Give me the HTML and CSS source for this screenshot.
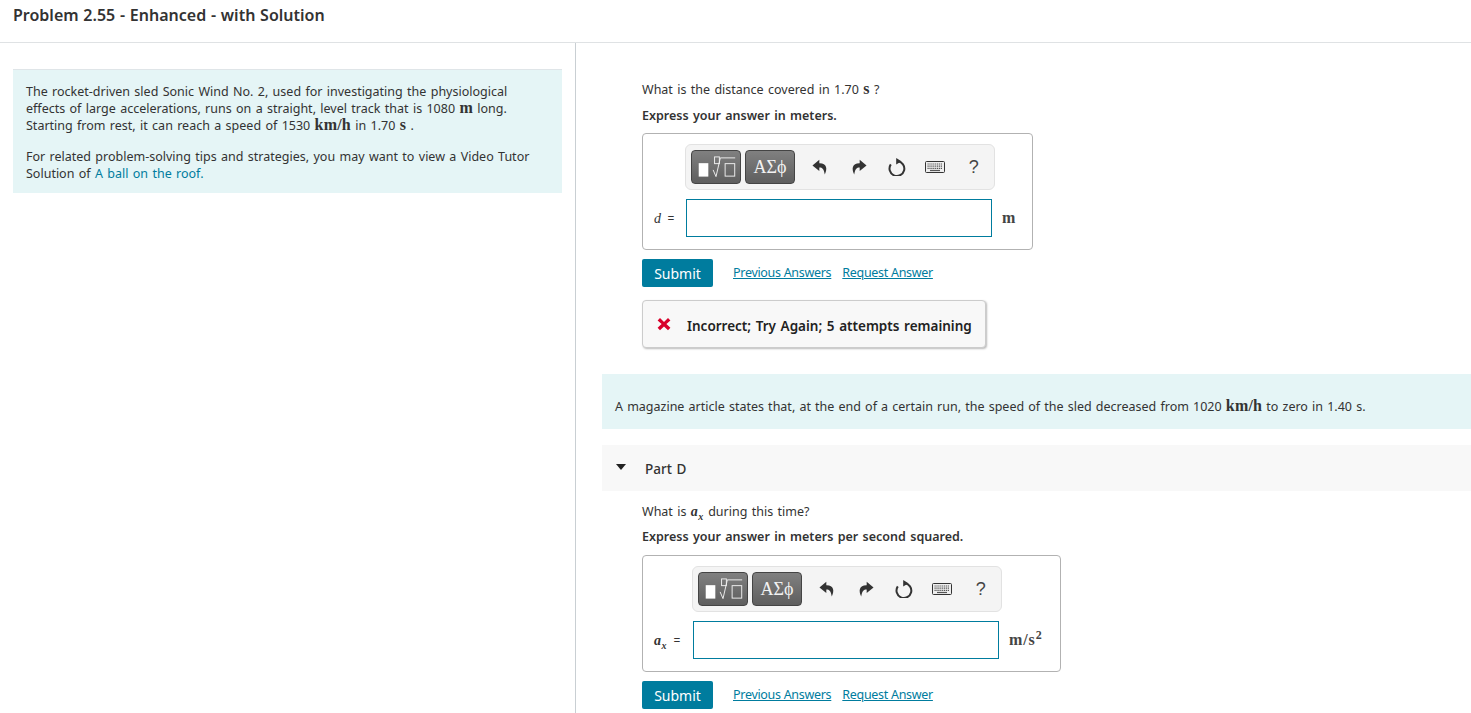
FILE: index.html
```html
<!DOCTYPE html>
<html lang="en">
<head>
    <meta charset="UTF-8">
    <meta name="viewport" content="width=device-width, initial-scale=1.0">
    <title>Problem 2.55 - Enhanced - with Solution</title>
    <link rel="stylesheet" href="styles.css">
</head>
<body>
    <svg class="sprite" aria-hidden="true">
        <symbol id="icon-undo" viewBox="0 0 14 14">
            <path d="M6.4 .6 L0.4 5.6 L6.4 10.4 V7.4 C8.8 7.3 10.4 8.4 11.2 13.6 C13.8 8.4 12.8 3.6 6.4 3.8 Z"/>
        </symbol>
        <symbol id="icon-redo" viewBox="0 0 14 14">
            <path d="M7.6 .6 L13.6 5.6 L7.6 10.4 V7.4 C5.2 7.3 3.6 8.4 2.8 13.6 C0.2 8.4 1.2 3.6 7.6 3.8 Z"/>
        </symbol>
        <symbol id="icon-reset" viewBox="0 0 18 18">
            <path d="M9.6 3.2 A7.4 7.4 0 1 1 2.8 6.4" fill="none" stroke="#333" stroke-width="2"/>
            <path d="M8.2 0 L13.4 3.2 L8.2 6.6 Z"/>
        </symbol>
        <symbol id="icon-keyboard" viewBox="0 0 20 12">
            <rect x="0.5" y="0.5" width="19" height="11" rx="1" fill="#eee" stroke="#333"/>
            <path d="M2.5 3h15M2.5 5.2h15M2.5 7.4h15" stroke="#555" stroke-width="1.2" stroke-dasharray="1.2 .7"/>
            <path d="M5 9.5h10" stroke="#555" stroke-width="1.2"/>
        </symbol>
        <symbol id="icon-templates" viewBox="0 0 50 34">
            <rect x="7" y="13" width="10" height="14" fill="#fff"/>
            <rect x="23.5" y="6.5" width="5" height="7" fill="none" stroke="#eee"/>
            <path d="M22 20 L25 27 L29.500 7.500 H45" fill="none" stroke="#eee"/>
            <rect x="34.500" y="13.500" width="10" height="13" fill="none" stroke="#eee"/>
        </symbol>
    </svg>

    <div class="header">
        <h1>Problem 2.55 - Enhanced - with Solution</h1>
    </div>

    <div class="main">
        <div class="left-pane">
            <div class="intro">
                <p>The rocket-driven sled Sonic Wind No. 2, used for investigating the physiological effects of large accelerations, runs on a straight, level track that is 1080 <b class="unit">m</b> long. Starting from rest, it can reach a speed of 1530 <b class="unit">km/h</b> in 1.70 <b class="unit">s</b> .</p>
                <p>For related problem-solving tips and strategies, you may want to view a Video Tutor Solution of <a href="#">A ball on the roof.</a></p>
            </div>
        </div>

        <div class="right-pane">
            <div class="question first">
                <p class="ask">What is the distance covered in 1.70 <b class="unit">s</b> ?</p>
                <p class="express">Express your answer in meters.</p>
                <div class="answer-box">
                    <div class="toolbar">
                        <span class="tool-btn tool-templates"><svg width="50" height="34"><use href="#icon-templates"/></svg></span>
                        <span class="tool-btn tool-greek">ΑΣϕ</span>
                        <span class="tool-icon"><svg width="16" height="16"><use href="#icon-undo"/></svg></span>
                        <span class="tool-icon"><svg width="16" height="16"><use href="#icon-redo"/></svg></span>
                        <span class="tool-icon"><svg width="18" height="18"><use href="#icon-reset"/></svg></span>
                        <span class="tool-icon"><svg width="20" height="12"><use href="#icon-keyboard"/></svg></span>
                        <span class="tool-icon tool-help">?</span>
                    </div>
                    <div class="answer-row">
                        <span class="var"><i>d</i> <span class="eq">=</span></span>
                        <input class="answer-input" type="text">
                        <span class="answer-unit">m</span>
                    </div>
                </div>
                <div class="actions">
                    <button class="submit">Submit</button>
                    <a href="#">Previous Answers</a>
                    <a href="#">Request Answer</a>
                </div>
                <div class="feedback">
                    <svg width="14" height="14" viewBox="0 0 14 14"><path d="M3 1 L7 5 L11 1 L13.4 3.4 L9.4 7 L13.4 10.8 L11 13.2 L7 9.4 L3 13.2 L.6 10.8 L4.6 7 L.6 3.4 Z" fill="#d8002a"/></svg>
                    <span>Incorrect; Try Again; 5 attempts remaining</span>
                </div>
            </div>

            <div class="note">
                A magazine article states that, at the end of a certain run, the speed of the sled decreased from 1020 <b class="unit">km/h</b> to zero in 1.40 <b class="unit-plain">s</b>.
            </div>

            <div class="part-head">
                <span class="caret"></span>
                <span>Part D</span>
            </div>

            <div class="question last">
                <p class="ask">What is <b class="mathvar">a<sub>x</sub></b> during this time?</p>
                <p class="express">Express your answer in meters per second squared.</p>
                <div class="answer-box wide">
                    <div class="toolbar">
                        <span class="tool-btn tool-templates"><svg width="50" height="34"><use href="#icon-templates"/></svg></span>
                        <span class="tool-btn tool-greek">ΑΣϕ</span>
                        <span class="tool-icon"><svg width="16" height="16"><use href="#icon-undo"/></svg></span>
                        <span class="tool-icon"><svg width="16" height="16"><use href="#icon-redo"/></svg></span>
                        <span class="tool-icon"><svg width="18" height="18"><use href="#icon-reset"/></svg></span>
                        <span class="tool-icon"><svg width="20" height="12"><use href="#icon-keyboard"/></svg></span>
                        <span class="tool-icon tool-help">?</span>
                    </div>
                    <div class="answer-row">
                        <span class="var"><b class="mathvar">a<sub>x</sub></b> <span class="eq">=</span></span>
                        <input class="answer-input" type="text">
                        <span class="answer-unit">m/s<sup>2</sup></span>
                    </div>
                </div>
                <div class="actions">
                    <button class="submit">Submit</button>
                    <a href="#">Previous Answers</a>
                    <a href="#">Request Answer</a>
                </div>
            </div>
        </div>
    </div>
</body>
</html>
```

FILE: styles.css
```css
html, body {
    height: 100%;
}
body {
    margin: 0;
    background: #fff;
    color: #333;
    font-family: "Noto Sans", "Open Sans", sans-serif;
    font-size: 12.5px;
    line-height: 16px;
    word-spacing: 1.1px;
    display: flex;
    flex-direction: column;
    overflow: hidden;
}
p {
    margin: 0;
}
a {
    color: #007c9e;
    text-decoration: none;
}
.sprite {
    display: none;
}
.header {
    height: 42px;
    flex: none;
    border-bottom: 1px solid #dfe2e4;
}
.header h1 {
    margin: 0;
    padding: 5px 0 0 13px;
    font-size: 16px;
    line-height: 20px;
    font-weight: 600;
    word-spacing: 0.6px;
    color: #333;
}
.main {
    display: flex;
    flex: 1;
    min-height: 0;
}
.left-pane {
    width: 575px;
    flex: none;
    border-right: 1px solid #c9cfd3;
    padding-top: 26px;
}
.intro {
    margin: 0 13px;
    padding: 13px 30px 11px 13px;
    background: #e5f5f6;
    border-top: 1px solid #dfe5e8;
    line-height: 17px;
}
.intro p + p {
    margin-top: 14px;
}
.unit {
    font-family: "Liberation Serif", serif;
    font-size: 16px;
    font-weight: bold;
    letter-spacing: 0.2px;
}
.intro .unit {
    line-height: 14px;
}
.unit-plain {
    font-weight: 400;
}
.right-pane {
    flex: 1;
    min-width: 0;
    padding-left: 26px;
}
.question {
    padding-left: 40px;
}
.question.first {
    padding-top: 37px;
}
.ask {
    line-height: 18px;
    margin-bottom: 9px;
}
.last .ask {
    margin-bottom: 8px;
}
.express {
    font-weight: 600;
    margin-bottom: 9px;
}
.last .express {
    margin-bottom: 10px;
}
.mathvar {
    font-family: "Liberation Serif", serif;
    font-style: italic;
    font-size: 14px;
    letter-spacing: 0.5px;
}
.mathvar sub {
    font-size: 10px;
    line-height: 0;
}
.answer-box {
    width: fit-content;
    border: 1px solid #b2b2b2;
    border-radius: 4px;
    padding: 10px 16px 12px 11px;
}
.wide {
    padding-right: 17px;
}
.toolbar {
    display: flex;
    align-items: center;
    width: 310px;
    height: 46px;
    box-sizing: border-box;
    margin-left: 31px;
    padding-left: 5px;
    background: #f4f4f4;
    border: 1px solid #e2e2e2;
    border-radius: 6px;
}
.wide .toolbar {
    margin-left: 38px;
}
.tool-btn {
    height: 34px;
    box-sizing: border-box;
    display: flex;
    align-items: center;
    justify-content: center;
    border: 1px solid #444;
    border-radius: 4px;
    background: linear-gradient(#808080, #5e5e5e);
    color: #f2f2f2;
}
.tool-templates {
    width: 50px;
    margin-right: 4px;
}
.tool-greek {
    width: 50px;
    margin-right: 6px;
    font-family: "Liberation Serif", serif;
    font-size: 18px;
}
.tool-icon {
    width: 38.4px;
    display: flex;
    align-items: center;
    justify-content: center;
    color: #333;
    fill: #333;
}
.tool-help {
    font-family: "Liberation Sans", sans-serif;
    font-size: 18px;
    color: #444;
}
.answer-row {
    display: flex;
    align-items: center;
    margin-top: 9px;
    height: 38px;
}
.var {
    width: 32px;
    flex: none;
    padding-top: 2px;
    font-family: "Liberation Serif", serif;
    font-size: 14px;
}
.wide .var {
    width: 39px;
}
.eq {
    font-family: "Noto Sans", sans-serif;
    font-size: 12px;
    margin-left: 2px;
}
.answer-input {
    width: 306px;
    height: 38px;
    box-sizing: border-box;
    margin: 0;
    padding: 0;
    border: 1px solid #007c9e;
    background: #fff;
}
.answer-unit {
    margin-left: 10px;
    font-family: "Liberation Serif", serif;
    font-size: 16px;
    font-weight: bold;
    letter-spacing: 0.9px;
    color: #444;
}
.answer-unit sup {
    font-size: 12px;
    line-height: 0;
}
.actions {
    display: flex;
    align-items: center;
    margin-top: 9px;
    height: 28px;
    word-spacing: 0;
}
.actions a {
    text-decoration: underline;
    margin-right: 11px;
    letter-spacing: -0.3px;
}
.submit {
    width: 71px;
    height: 28px;
    margin-right: 20px;
    padding: 0;
    border: none;
    border-radius: 2px;
    background: #007c9e;
    color: #fff;
    font-family: "Noto Sans", sans-serif;
    font-size: 14px;
    cursor: pointer;
}
.feedback {
    display: flex;
    align-items: center;
    gap: 16px;
    width: fit-content;
    height: 48px;
    box-sizing: border-box;
    margin-top: 13px;
    padding: 3px 13px 0 14px;
    background: #f8f8f8;
    border: 1px solid #ccc;
    border-radius: 4px;
    box-shadow: 1px 1px 2px #bbb;
    font-size: 13.5px;
    font-weight: 600;
    color: #222;
}
.feedback svg {
    position: relative;
    top: -2px;
}
.note {
    margin-top: 26px;
    height: 55px;
    box-sizing: border-box;
    padding: 24px 0 0 13px;
    background: #e5f5f6;
    word-spacing: 0.9px;
}
.part-head {
    display: flex;
    align-items: center;
    height: 46px;
    box-sizing: border-box;
    padding: 2px 0 0 14px;
    margin-top: 16px;
    margin-bottom: 12px;
    background: #f8f8f8;
    font-size: 13.5px;
    font-weight: 500;
}
.caret {
    width: 0;
    height: 0;
    margin-right: 19px;
    border-left: 5px solid transparent;
    border-right: 5px solid transparent;
    border-top: 6px solid #222;
    position: relative;
    top: -2px;
}
```
